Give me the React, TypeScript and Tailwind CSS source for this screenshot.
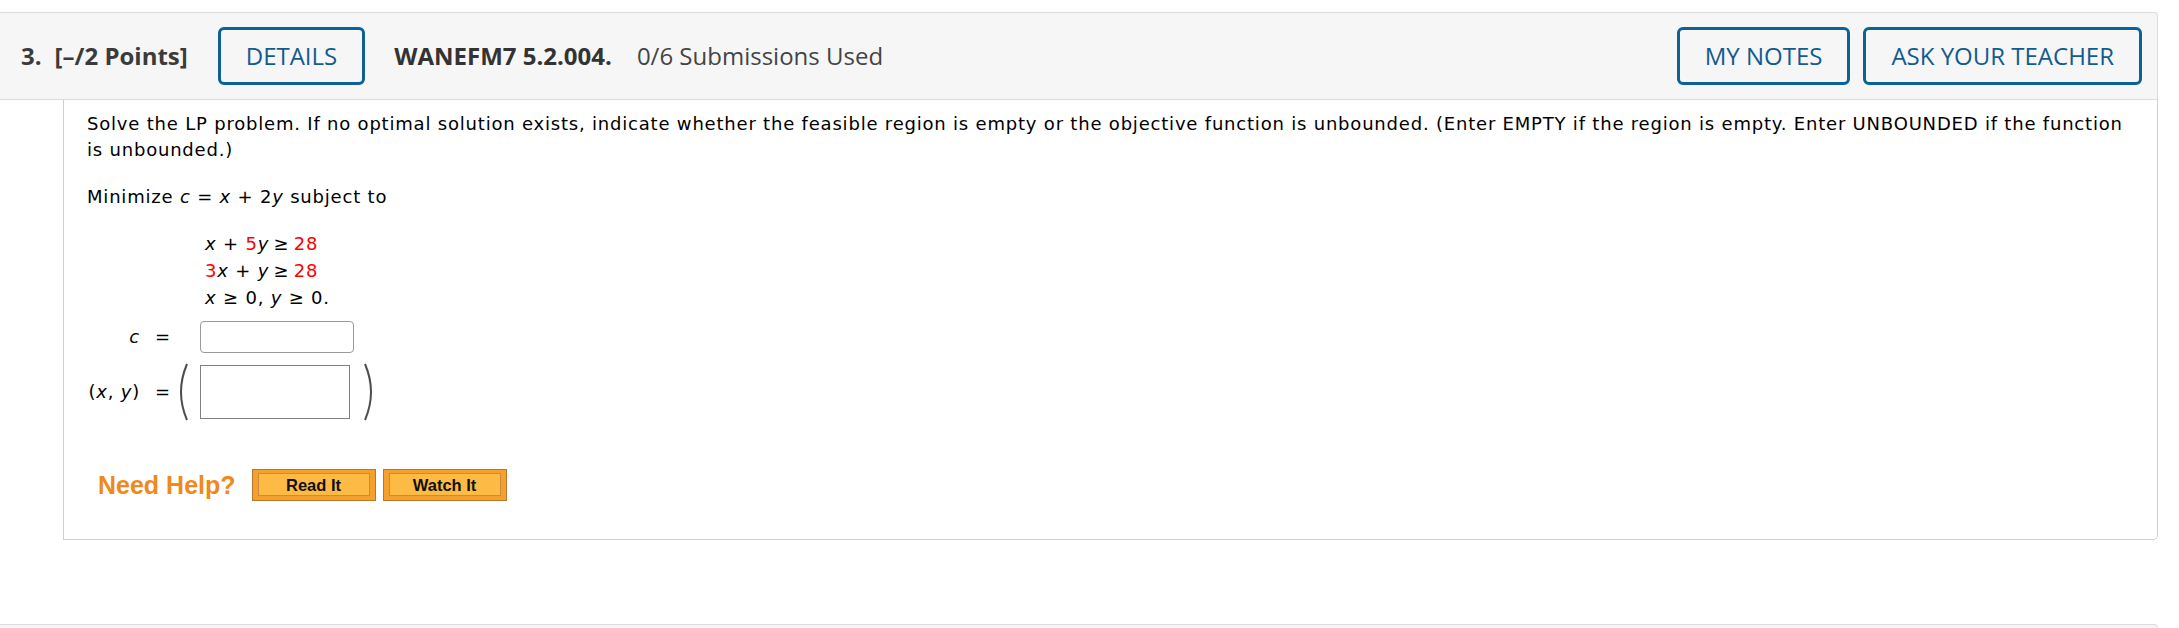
import React from 'react';

const BLUE = 'border-[#0d6198] text-[#125b8f]';

const OutlineButton = ({ label }: { label: string }) => (
  <button
    className={`h-[58px] px-[25px] border-[3px] ${BLUE} rounded-[6px] bg-transparent text-[24px] leading-none uppercase`}
  >
    {label}
  </button>
);

const HelpButton = ({ label }: { label: string }) => (
  <button className="w-[124px] h-[32px] border border-[#b5782f] bg-[#f59f2c] px-[5px] pt-[3px] pb-[4px]">
    <span className="flex h-full w-full items-center justify-center border border-[#c98b3c] bg-[#fdbb45] font-['Liberation_Sans'] text-[16.5px] font-bold text-[#111]">
      {label}
    </span>
  </button>
);

// stretchy delimiter drawn as a curve, like the MathJax one in the picture
const Paren = ({ right = false }: { right?: boolean }) => (
  <svg width="13" height="58" viewBox="0 0 13 58" className="shrink-0">
    <path
      d={right ? 'M2 1 Q14 29 2 57' : 'M11 1 Q-1 29 11 57'}
      fill="none"
      stroke="#4d4d4d"
      strokeWidth="2"
    />
  </svg>
);

const Red = ({ children }: { children: React.ReactNode }) => <span className="text-[#ff0000]">{children}</span>;

export default function App() {
  return (
    <div className="w-full h-[628px] overflow-hidden bg-white pt-[12px]">
      <div className="w-[2158px]">
        {/* question header */}
        <div className="flex h-[88px] items-center border-t border-b border-r border-[#dcdcdc] rounded-tr-[4px] bg-[#f6f6f6] pl-[21px] pr-[15px] font-['Open_Sans'] text-[24px] text-[#3b3b3b]">
          <span className="font-bold">3.</span>
          <span className="ml-[13px] font-bold">[–/2 Points]</span>
          <div className="ml-[30px]">
            <OutlineButton label="Details" />
          </div>
          <span className="ml-[29px] font-bold text-[#333]">WANEFM7 5.2.004.</span>
          <span className="ml-[25px] text-[#444]">0/6 Submissions Used</span>
          <div className="ml-auto flex gap-[13px]">
            <OutlineButton label="My Notes" />
            <OutlineButton label="Ask Your Teacher" />
          </div>
        </div>

        {/* question body */}
        <div className="ml-[63px] h-[440px] border-l border-r border-b border-[#cfcfcf] rounded-br-[5px] pl-[23px] pr-[14px] pt-[11px] font-['DejaVu_Sans'] text-[18px] leading-[26px] tracking-[0.8px] text-black">
          <p>
            Solve the LP problem. If no optimal solution exists, indicate whether the feasible region is empty or the
            objective function is unbounded. (Enter EMPTY if the region is empty. Enter UNBOUNDED if the function is
            unbounded.)
          </p>

          <p className="mt-[21px]">
            Minimize <i>c</i> = <i>x</i> + 2<i>y</i> subject to
          </p>

          <div className="mt-[20px] ml-[118px] leading-[27px]">
            <div>
              <i>x</i> + <Red>5</Red>
              <i>y</i>{'\u2009'}≥{'\u2009'}
              <Red>28</Red>
            </div>
            <div>
              <Red>3</Red>
              <i>x</i> + <i>y</i>{'\u2009'}≥{'\u2009'}
              <Red>28</Red>
            </div>
            <div>
              <i>x</i> ≥ 0, <i>y</i> ≥ 0.
            </div>
          </div>

          <div className="mt-[10px] flex h-[32px] items-center">
            <span className="w-[53px] text-right">
              <i>c</i>
            </span>
            <span className="ml-[15px] w-[13px]">=</span>
            <input className="ml-[32px] h-[32px] w-[154px] rounded-[4px] border border-[#9a9a9a] bg-white" />
          </div>

          <div className="mt-[10px] flex h-[57px] items-center">
            <span className="w-[53px] whitespace-nowrap text-right">
              (<i>x</i>, <i>y</i>)
            </span>
            <span className="ml-[15px] w-[13px]">=</span>
            <div className="ml-[8px]">
              <Paren />
            </div>
            <input className="ml-[11px] h-[54px] w-[150px] border border-[#808080] bg-white" />
            <div className="ml-[13px]">
              <Paren right />
            </div>
          </div>

          <div className="mt-[49px] ml-[11px] flex items-center tracking-normal">
            <span className="font-['Liberation_Sans'] text-[25px] font-bold leading-none text-[#f0891a]">Need Help?</span>
            <div className="ml-[16px] flex gap-[7px]">
              <HelpButton label="Read It" />
              <HelpButton label="Watch It" />
            </div>
          </div>
        </div>

        {/* next question header peeking in */}
        <div className="mt-[84px] h-[20px] border-t border-r border-[#dcdcdc] rounded-tr-[4px] bg-[#f6f6f6]" />
      </div>
    </div>
  );
}
